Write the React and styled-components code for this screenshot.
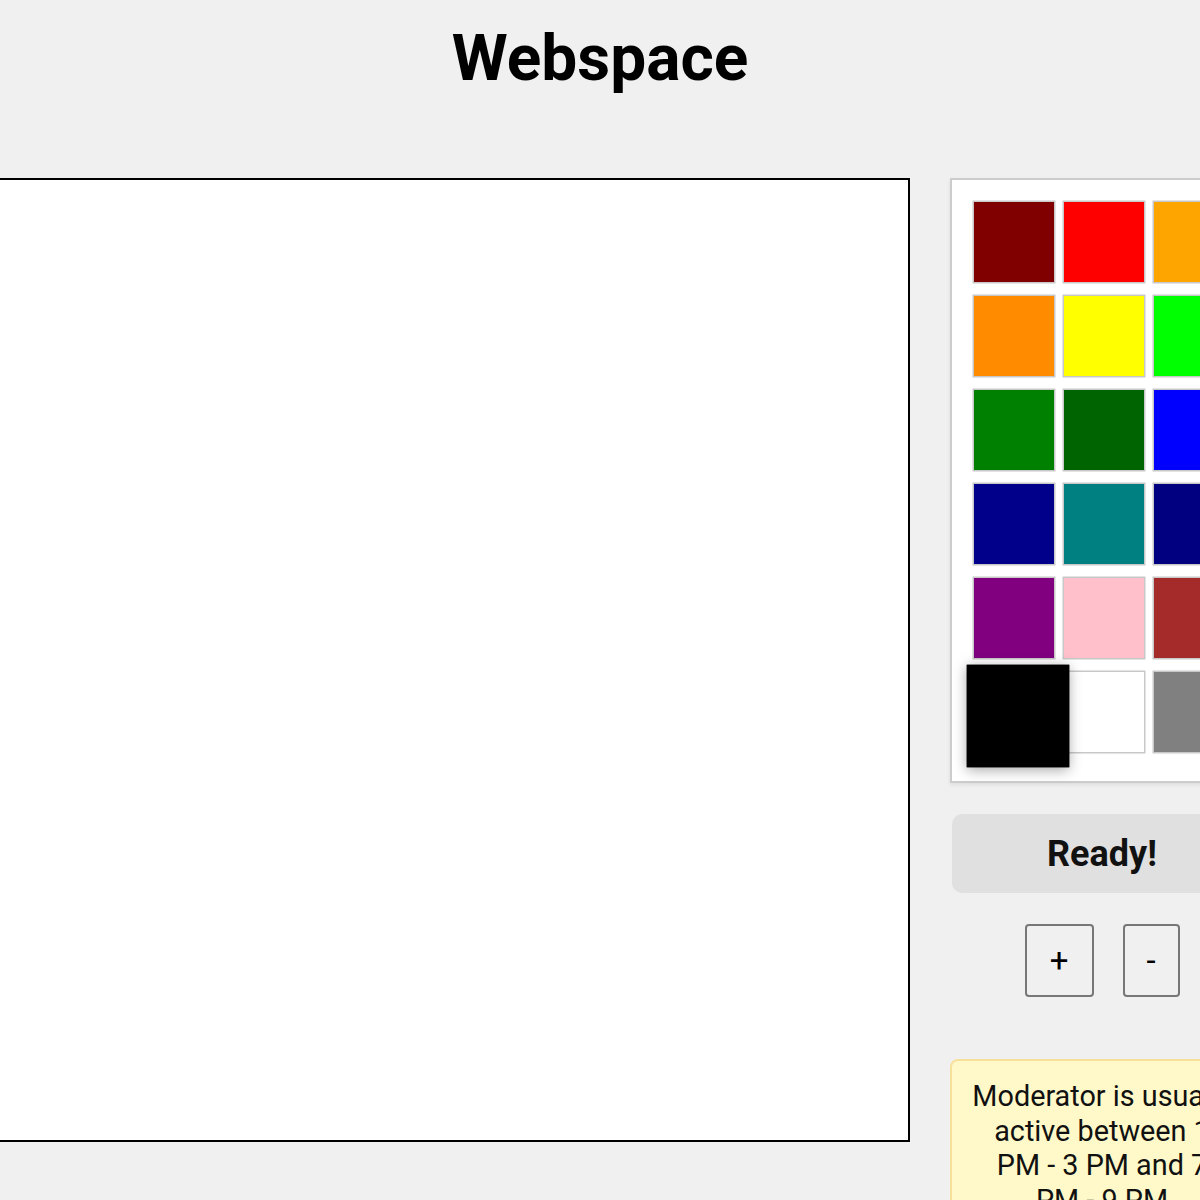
import React, { useState } from "react";
import styled, { createGlobalStyle } from "styled-components";

const Global = createGlobalStyle`
  html, body { margin: 0; padding: 0; background: #f0f0f0; }
  body { font-family: Roboto, "Liberation Sans", Arial, sans-serif; color: #000; overflow: hidden; }
`;

const Page = styled.div`
  width: 1200px;
  display: flex;
  flex-direction: column;
  align-items: center;
`;

const Title = styled.h1`
  margin: 21px 0 0;
  font-size: 64px;
  font-weight: 700;
  line-height: normal;
  text-align: center;
`;

const Main = styled.div`
  width: 100%;
  margin-top: 82px;
  display: flex;
  justify-content: center;
  align-items: flex-start;
  gap: 40px;
`;

const Canvas = styled.div`
  flex: 0 0 auto;
  width: 960px;
  height: 960px;
  background: #fff;
  border: 2px solid #000;
`;

const Sidebar = styled.div`
  flex: 0 0 auto;
  width: 304px;
  display: flex;
  flex-direction: column;
  align-items: center;
`;

const Palette = styled.div`
  box-sizing: border-box;
  width: 304px;
  background: #fff;
  border: 2px solid #ccc;
  box-shadow: 0 2px 4px rgba(0, 0, 0, 0.08);
  padding: 21px 17px 28px 21px;
  display: grid;
  grid-template-columns: repeat(3, 82px);
  column-gap: 8px;
  row-gap: 12px;
`;

const Swatch = styled.div`
  width: 80px;
  height: 80px;
  border: 1px solid ${(p) => (p.$active ? p.$color : "#c8c8c8")};
  box-shadow: ${(p) => (p.$active ? "0 2px 10px rgba(0,0,0,0.35)" : "0 0 0 0.5px #c8c8c8")};
  background: ${(p) => p.$color};
  transform: ${(p) => (p.$active ? "translate(4px, 4px) scale(1.25)" : "none")};
  position: relative;
  z-index: ${(p) => (p.$active ? 2 : 1)};
  cursor: pointer;
`;

const ReadyButton = styled.button`
  margin-top: 31px;
  width: 300px;
  height: 79px;
  border: none;
  border-radius: 10px;
  background: #e0e0e0;
  font-family: Roboto, "Liberation Sans", Arial, sans-serif;
  font-size: 36px;
  font-weight: 700;
  color: #111;
  cursor: pointer;
`;

const ZoomRow = styled.div`
  margin-top: 31px;
  display: flex;
  justify-content: center;
  gap: 29px;
`;

const ZoomButton = styled.button`
  box-sizing: border-box;
  width: ${(p) => p.$w}px;
  height: 73px;
  padding: 0;
  border: 2px solid #777;
  border-radius: 4px;
  background: transparent;
  font-family: Roboto, "Liberation Sans", Arial, sans-serif;
  font-size: 33px;
  color: #000;
  cursor: pointer;
`;

const Note = styled.div`
  box-sizing: border-box;
  margin-top: 62px;
  width: 304px;
  padding: 18px 20px;
  background: #fff9c9;
  border: 2px solid #f7e19a;
  border-radius: 8px;
  font-size: 28.8px;
  line-height: 1.2;
  text-align: center;
  color: #111;
`;

const COLORS = [
  "#800000", "#ff0000", "#ffa500",
  "#ff8c00", "#ffff00", "#00ff00",
  "#008000", "#006400", "#0000ff",
  "#00008b", "#008080", "#000080",
  "#800080", "#ffc0cb", "#a52a2a",
  "#000000", "#ffffff", "#808080",
];

export default function App() {
  const [color, setColor] = useState("#000000");
  return (
    <>
      <Global />
      <Page>
        <Title>Webspace</Title>
        <Main>
          <Canvas />
          <Sidebar>
            <Palette>
              {COLORS.map((c) => (
                <Swatch key={c} $color={c} $active={c === color} onClick={() => setColor(c)} />
              ))}
            </Palette>
            <ReadyButton>Ready!</ReadyButton>
            <ZoomRow>
              <ZoomButton $w={69}>+</ZoomButton>
              <ZoomButton $w={57}>-</ZoomButton>
            </ZoomRow>
            <Note>
              Moderator is usually active between 1 PM - 3 PM and 7 PM - 9 PM
            </Note>
          </Sidebar>
        </Main>
      </Page>
    </>
  );
}
